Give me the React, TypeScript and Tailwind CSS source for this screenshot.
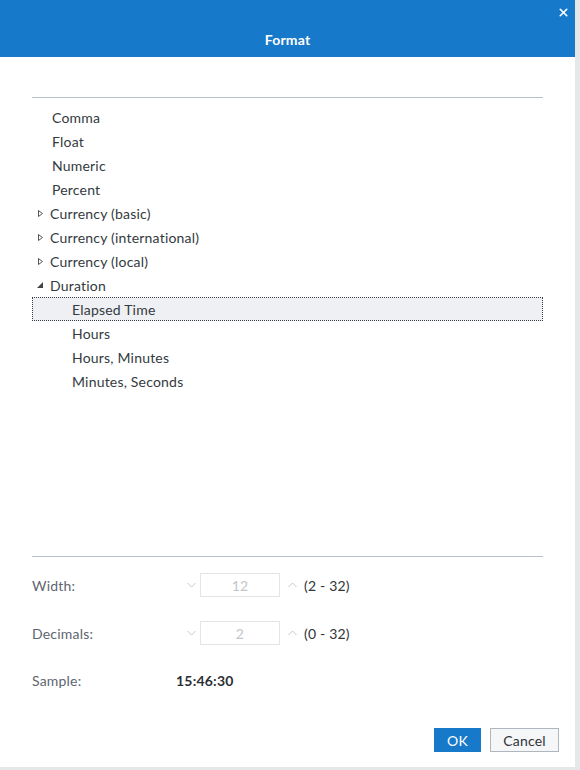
import { X } from 'lucide-react'

type Item = { label: string; level: number; arrow?: 'closed' | 'open'; selected?: boolean }

const items: Item[] = [
  { label: 'Comma', level: 0 },
  { label: 'Float', level: 0 },
  { label: 'Numeric', level: 0 },
  { label: 'Percent', level: 0 },
  { label: 'Currency (basic)', level: 0, arrow: 'closed' },
  { label: 'Currency (international)', level: 0, arrow: 'closed' },
  { label: 'Currency (local)', level: 0, arrow: 'closed' },
  { label: 'Duration', level: 0, arrow: 'open' },
  { label: 'Elapsed Time', level: 1, selected: true },
  { label: 'Hours', level: 1 },
  { label: 'Hours, Minutes', level: 1 },
  { label: 'Minutes, Seconds', level: 1 },
]

function Chevron({ up }: { up?: boolean }) {
  return (
    <svg width="9" height="6" viewBox="0 0 9 6" className="text-[#c4c8cd]">
      <path d={up ? 'M0.5 5L4.5 1L8.5 5' : 'M0.5 1L4.5 5L8.5 1'} fill="none" stroke="currentColor" strokeWidth="1" />
    </svg>
  )
}

function Spinner({ label, value, range, className }: { label: string; value: string; range: string; className?: string }) {
  return (
    <div className={`flex items-center h-6 ${className ?? ''}`}>
      <div className="w-[150px] text-[#5d6670]">{label}</div>
      <div className="w-[18px] flex justify-center"><Chevron /></div>
      <div className="w-[80px] h-6 border border-[#e1e4e8] flex items-center justify-center text-[#c2c6cb]">{value}</div>
      <div className="w-[24px] flex justify-center"><Chevron up /></div>
      <div className="text-[#2f3338]">{range}</div>
    </div>
  )
}

export default function App() {
  return (
    <div className="flex w-[580px] h-[770px] bg-[#e6e7e9] text-[14px] tracking-[0.2px]" style={{ fontFamily: 'Lato, "Open Sans", sans-serif' }}>
      <div className="w-[575px] h-[767px] bg-white flex flex-col">
        <div className="h-[57px] bg-[#1779ca] relative flex items-end justify-center pb-[7px]">
          <span className="text-white font-bold text-[14px]">Format</span>
          <X size={13} strokeWidth={3} className="absolute right-[5px] top-[6px] text-white" />
        </div>

        <div className="mx-8 mt-10 border-t border-[#b9c0c8]" />
        <div className="mx-8 pt-[7px] h-[458px]">
          {items.map(it => (
            <div key={it.label}
              className={`h-6 flex items-center text-[#333a40] ${it.selected ? 'bg-[#eef0f3] border border-dotted border-[#3a4048]' : ''}`}>
              {it.level === 1 ? (
                <span className={it.selected ? 'pl-[39px]' : 'pl-10'}>{it.label}</span>
              ) : it.arrow ? (
                <span className="flex items-center">
                  <span className="w-[18px] flex justify-end pr-[7px]">
                    {it.arrow === 'closed' ? (
                      <svg width="5" height="7" viewBox="0 0 5 7"><path d="M0.5 0.5L4.5 3.5L0.5 6.5Z" fill="none" stroke="#555" strokeWidth="1" /></svg>
                    ) : (
                      <svg width="6" height="6" viewBox="0 0 6 6"><path d="M6 0L6 6L0 6Z" fill="#444" /></svg>
                    )}
                  </span>
                  {it.label}
                </span>
              ) : (
                <span className="pl-5">{it.label}</span>
              )}
            </div>
          ))}
        </div>
        <div className="mx-8 border-t border-[#b9c0c8]" />

        <div className="mx-8 mt-4 flex flex-col">
          <Spinner label="Width:" value="12" range="(2 - 32)" />
          <Spinner label="Decimals:" value="2" range="(0 - 32)" className="mt-6" />
          <div className="flex items-center h-6 mt-[23px]">
            <div className="w-[144px] text-[#5d6670]">Sample:</div>
            <div className="font-bold text-[#2b2f33]">15:46:30</div>
          </div>
        </div>

        <div className="flex-1" />
        <div className="flex justify-end gap-[9px] pr-4 pb-[15px]">
          <button className="w-[47px] h-6 bg-[#1779ca] text-white">OK</button>
          <button className="w-[69px] h-6 bg-[#f5f6f8] border border-[#b0b6be] text-[#2f3338]">Cancel</button>
        </div>
      </div>
    </div>
  )
}
